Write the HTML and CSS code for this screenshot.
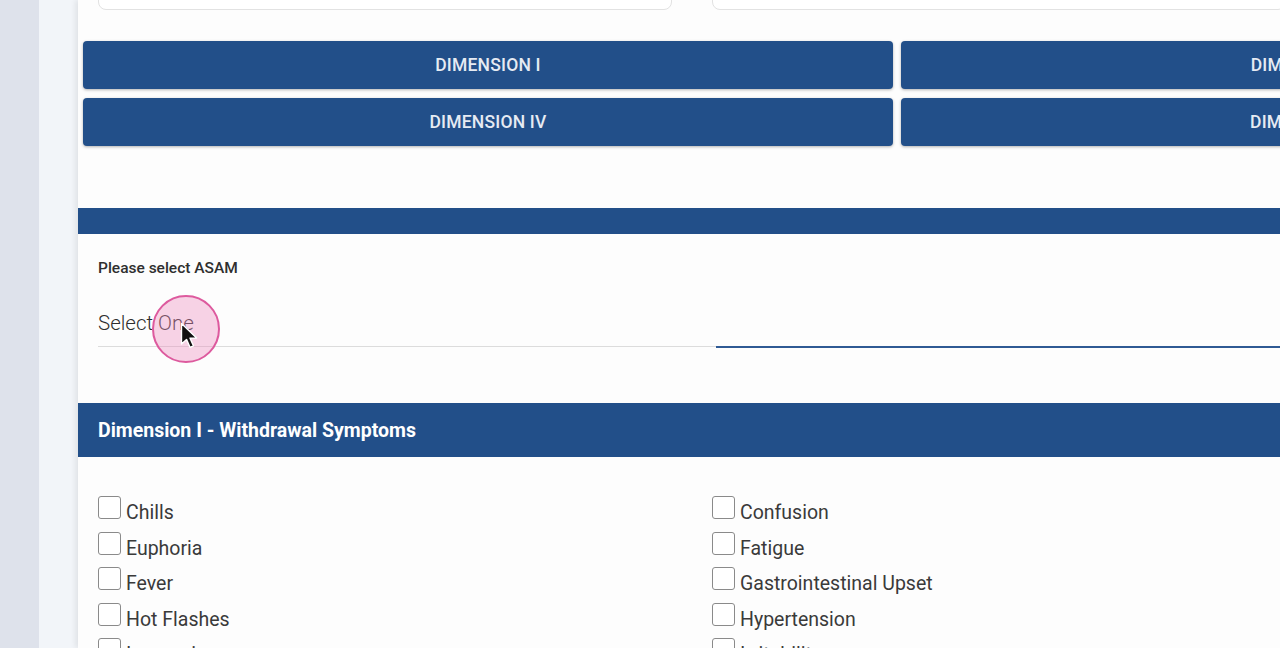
FILE: index.html
```html
<!DOCTYPE html>
<html lang="en">
<head>
<meta charset="utf-8">
<title>ASAM Assessment</title>
<link rel="stylesheet" href="styles.css">
</head>
<body>
<div class="app">
  <aside class="rail"></aside>
  <div class="gutter"></div>
  <main class="panel">
    <div class="inputs-row">
      <div class="field-box"></div>
      <div class="field-box"></div>
    </div>

    <div class="dim-grid">
      <button class="dim-btn">Dimension I</button>
      <button class="dim-btn">Dimension II</button>
      <button class="dim-btn">Dimension III</button>
      <button class="dim-btn">Dimension IV</button>
      <button class="dim-btn">Dimension V</button>
      <button class="dim-btn">Dimension VI</button>
    </div>

    <div class="bar"></div>

    <section class="asam">
      <div class="asam-label">Please select ASAM</div>
      <div class="asam-row">
        <div class="select">Select One</div>
        <div class="select-active"></div>
      </div>
    </section>

    <div class="section-head">Dimension I - Withdrawal Symptoms</div>

    <div class="checks">
      <label class="check"><span class="box"></span><span class="txt">Chills</span></label>
      <label class="check"><span class="box"></span><span class="txt">Confusion</span></label>
      <label class="check"><span class="box"></span><span class="txt">Euphoria</span></label>
      <label class="check"><span class="box"></span><span class="txt">Fatigue</span></label>
      <label class="check"><span class="box"></span><span class="txt">Fever</span></label>
      <label class="check"><span class="box"></span><span class="txt">Gastrointestinal Upset</span></label>
      <label class="check"><span class="box"></span><span class="txt">Hot Flashes</span></label>
      <label class="check"><span class="box"></span><span class="txt">Hypertension</span></label>
      <label class="check"><span class="box"></span><span class="txt">Insomnia</span></label>
      <label class="check"><span class="box"></span><span class="txt">Irritability</span></label>
    </div>
  </main>
</div>

<div class="click-ring"></div>
<svg class="pointer" width="20" height="28" viewBox="0 0 20 28" aria-hidden="true">
  <path d="M1.5 1.5 L1.5 22 L6.5 17.4 L10 25.3 L13.4 23.8 L10 16.1 L16.6 16.1 Z" fill="#111" stroke="#fff" stroke-width="1.4" stroke-linejoin="round"/>
</svg>
</body>
</html>
```

FILE: styles.css
```css
* { box-sizing: border-box; }

html, body {
  margin: 0;
  padding: 0;
  width: 1280px;
  height: 648px;
  overflow: hidden;
  background: #fdfdfd;
  font-family: Roboto, "Noto Sans", Arial, sans-serif;
}

.app {
  display: flex;
  width: 1280px;
  height: 648px;
  overflow: hidden;
}

.rail {
  flex: 0 0 39px;
  background: #dee2eb;
}

.gutter {
  flex: 0 0 39px;
  background: #f2f5f9;
}

.panel {
  flex: 0 0 auto;
  width: 1800px;
  background: #fdfdfd;
  box-shadow: -3px 0 5px rgba(0, 0, 0, 0.07);
  position: relative;
}

.inputs-row {
  display: flex;
  gap: 40px;
  padding: 0 20px;
  margin-top: -30px;
}

.field-box {
  flex: 0 0 574px;
  height: 40px;
  border: 1px solid #e2e2e2;
  border-radius: 8px;
  background: #fff;
}

.dim-grid {
  display: grid;
  grid-template-columns: repeat(3, 810px);
  column-gap: 8px;
  row-gap: 9px;
  margin-top: 31px;
  padding-left: 5px;
}

.dim-btn {
  height: 48px;
  border: none;
  border-radius: 4px;
  background: #224f89;
  color: #e6ebf3;
  font-family: Roboto, Arial, sans-serif;
  font-size: 17.5px;
  font-weight: 500;
  text-transform: uppercase;
  letter-spacing: 0.2px;
  box-shadow: 0 1px 3px rgba(0, 0, 0, 0.3);
  padding: 0;
}

.bar {
  height: 26px;
  margin-top: 62px;
  background: #224f89;
}

.asam {
  padding: 0 20px;
}

.asam-label {
  margin-top: 26px;
  font-size: 15.5px;
  line-height: 16px;
  font-weight: 500;
  color: #2f2f2f;
}

.asam-row {
  display: flex;
  margin-top: 27px;
}

.select {
  flex: 0 0 618px;
  height: 44px;
  line-height: 40px;
  font-size: 20.5px;
  font-weight: 300;
  color: #2e2e2e;
  border-bottom: 1px solid #dcdcdc;
}

.select-active {
  flex: 0 0 700px;
  height: 45px;
  border-bottom: 2px solid #2f5a94;
}

.section-head {
  margin-top: 55px;
  height: 54px;
  line-height: 52px;
  padding: 2px 0 0 20px;
  background: #224f89;
  color: #fff;
  font-size: 19.5px;
  font-weight: 700;
}

.checks {
  display: grid;
  grid-template-columns: 614px 614px;
  grid-auto-rows: 35.6px;
  padding: 39px 20px 0;
}

.check {
  display: flex;
  align-items: flex-start;
  gap: 5px;
}

.box {
  flex: 0 0 23px;
  width: 23px;
  height: 23px;
  border: 1.5px solid #8a8a8a;
  border-radius: 3px;
  background: #fff;
}

.txt {
  font-size: 19.5px;
  line-height: 22px;
  margin-top: 6px;
  color: #3a3a3a;
}

.click-ring {
  position: absolute;
  left: 152px;
  top: 295px;
  width: 68px;
  height: 68px;
  border-radius: 50%;
  border: 2px solid #dd5a9e;
  background: rgba(236, 140, 190, 0.38);
}

.pointer {
  position: absolute;
  left: 180px;
  top: 322px;
}
```
